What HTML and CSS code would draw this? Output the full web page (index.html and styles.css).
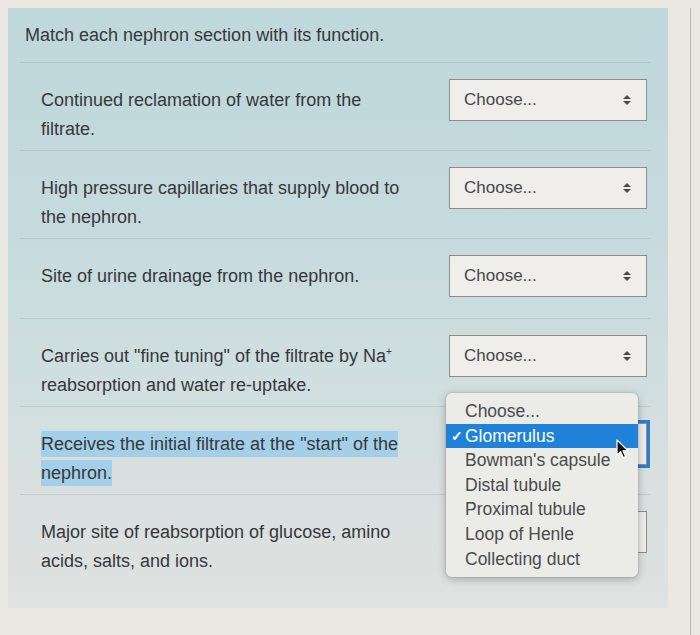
FILE: index.html
```html
<!DOCTYPE html>
<html lang="en">
  <head>
    <meta charset="UTF-8" />
    <meta name="viewport" content="width=device-width, initial-scale=1.0" />
    <title>Match each nephron section</title>
    <link rel="stylesheet" href="styles.css">
  </head>
  <body>
    <div class="screen">
      <div class="panel">
        <div class="question">Match each nephron section with its function.</div>

        <div class="match-row">
          <div class="stem">Continued reclamation of water from the<br>filtrate.</div>
          <div class="select"><span>Choose...</span><i class="arrows"></i></div>
        </div>

        <div class="match-row">
          <div class="stem">High pressure capillaries that supply blood to<br>the nephron.</div>
          <div class="select"><span>Choose...</span><i class="arrows"></i></div>
        </div>

        <div class="match-row">
          <div class="stem">Site of urine drainage from the nephron.</div>
          <div class="select"><span>Choose...</span><i class="arrows"></i></div>
        </div>

        <div class="match-row">
          <div class="stem">Carries out "fine tuning" of the filtrate by Na<sup>+</sup><br>reabsorption and water re-uptake.</div>
          <div class="select"><span>Choose...</span><i class="arrows"></i></div>
        </div>

        <div class="match-row">
          <div class="stem"><mark>Receives the initial filtrate at the "start" of the</mark><br><mark>nephron.</mark></div>
          <div class="select focused"><span>Glomerulus</span><i class="arrows"></i></div>
        </div>

        <div class="match-row">
          <div class="stem">Major site of reabsorption of glucose, amino<br>acids, salts, and ions.</div>
          <div class="select"><span>Choose...</span><i class="arrows"></i></div>
        </div>

        <!-- open option list of the fifth select -->
        <ul class="menu">
          <li>Choose...</li>
          <li class="active"><span class="check">✓</span>Glomerulus</li>
          <li>Bowman's capsule</li>
          <li>Distal tubule</li>
          <li>Proximal tubule</li>
          <li>Loop of Henle</li>
          <li>Collecting duct</li>
        </ul>

        <svg class="cursor" width="14" height="21" viewBox="0 0 14 21">
          <path d="M1 1 L1 16 L4.6 12.6 L7.2 18.6 L9.6 17.6 L7 11.8 L12 11.8 Z" fill="#111" stroke="#fff" stroke-width="1.2" stroke-linejoin="round"/>
        </svg>
      </div>
      <div class="gutter"></div>
    </div>
  </body>
</html>
```

FILE: styles.css
```css
body {
  margin: 0;
  background-color: #ebe8e1;
  font-family: 'Liberation Sans', Arial, sans-serif;
  color: #35383a;
  overflow: hidden;
}

.screen {
  display: flex;
  padding: 8px 0 0 8px;
  height: 627px;
}

.panel {
  position: relative;
  width: 660px;
  height: 600px;
  box-sizing: border-box;
  padding: 0 18px 0 12px;
  background: linear-gradient(180deg, #bfd8db 0%, #c5dadd 35%, #cfdedf 60%, #d9e0df 80%, #dee2e0 100%);
}

.gutter {
  width: 22px;
  border-right: 1px solid #b9b6ae;
}

.question {
  padding: 15px 0 15px 5px;
  font-size: 18px;
  line-height: 24px;
  border-bottom: 1px solid rgba(90, 110, 112, 0.18);
}

/* one stem + select per row */
.match-row {
  display: grid;
  grid-template-columns: 1fr 198px;
  align-items: start;
  min-height: 80px;
  box-sizing: border-box;
  padding: 23px 3px 6px 21px;
  border-bottom: 1px solid rgba(90, 110, 112, 0.16);
}

.match-row:last-of-type {
  border-bottom: none;
}

.stem {
  font-size: 18px;
  line-height: 29px;
}

.stem sup {
  font-size: 10px;
  line-height: 0;
}

.stem mark {
  background-color: #a3d0e8;
  color: inherit;
  padding: 3px 0;
}

.select {
  display: flex;
  align-items: center;
  justify-content: space-between;
  height: 42px;
  margin-top: -7px;
  box-sizing: border-box;
  padding: 0 15px 0 14px;
  background-color: #efeeea;
  border: 1px solid #8c8e8e;
  font-size: 17px;
  color: #464848;
}

.select.focused {
  box-shadow: 0 0 0 3px #2b7fd1;
}

/* up/down chevrons */
.arrows {
  display: flex;
  flex-direction: column;
  gap: 2px;
}

.arrows::before,
.arrows::after {
  content: '';
  width: 0;
  height: 0;
  border-left: 4px solid transparent;
  border-right: 4px solid transparent;
}

.arrows::before {
  border-bottom: 4.5px solid #4a4c4c;
}

.arrows::after {
  border-top: 4.5px solid #4a4c4c;
}

.menu {
  position: absolute;
  left: 438px;
  top: 385px;
  width: 192px;
  margin: 0;
  padding: 6px 0;
  list-style: none;
  background-color: #ebebe8;
  border-radius: 6px;
  box-shadow: 0 2px 9px rgba(0, 0, 0, 0.28), 0 0 0 1px rgba(0, 0, 0, 0.06);
  font-size: 17.5px;
  color: #4a4c4c;
}

.menu li {
  position: relative;
  height: 24.6px;
  line-height: 24.6px;
  padding-left: 19px;
}

.menu li.active {
  background-color: #1f82d8;
  color: #fff;
}

.menu .check {
  position: absolute;
  left: 5px;
  font-size: 14px;
  font-weight: bold;
}

.cursor {
  position: absolute;
  left: 608px;
  top: 431px;
}
```
